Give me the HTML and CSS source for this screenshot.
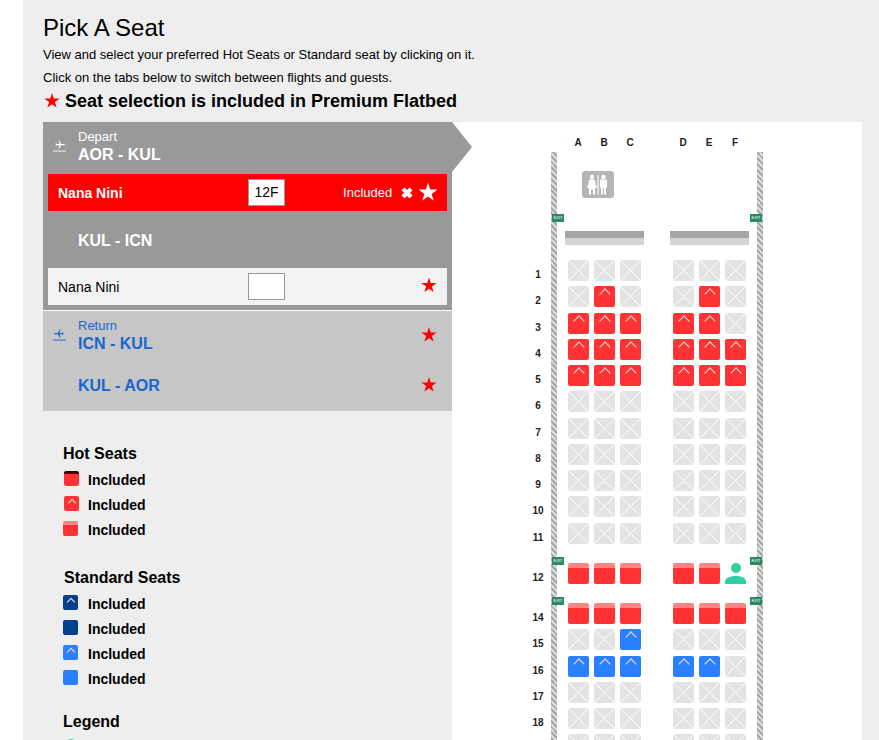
FILE: index.html
```html
<!DOCTYPE html>
<html lang="en">
<head>
    <meta charset="UTF-8">
    <meta name="viewport" content="width=device-width, initial-scale=1.0">
    <title>Pick A Seat</title>
    <link rel="stylesheet" href="styles.css">
</head>
<body>
    <svg class="defs" width="0" height="0">
        <symbol id="plane" viewBox="0 0 14 13">
            <path transform="translate(2 .5) scale(.85 .9)" d="M12 4.2H8L5.5 0H4.5L5.8 4.2H2.5L1.5 3H.8L1.4 5 .8 7H1.5L2.5 5.8H5.8L4.5 10H5.5L8 5.8H12C13 5.8 13 4.2 12 4.2Z"/>
            <rect x="0" y="11.5" width="14" height="1"/>
        </symbol>
        <symbol id="person" viewBox="0 0 21 21">
            <circle cx="11" cy="5" r="5"/>
            <path d="M0 21V19C0 15 5 13 11 13S21 15 21 19V21Z"/>
        </symbol>
    </svg>

    <div class="page">
        <h1>Pick A Seat</h1>
        <p>View and select your preferred Hot Seats or Standard seat by clicking on it.</p>
        <p>Click on the tabs below to switch between flights and guests.</p>
        <div class="notice"><span class="star star-title"></span>Seat selection is included in Premium Flatbed</div>

        <div class="content">
            <div class="sidebar">
                <div class="leg leg-active">
                    <div class="leg-head">
                        <svg class="leg-icon"><use href="#plane"/></svg>
                        <div>
                            <div class="leg-label">Depart</div>
                            <div class="leg-route">AOR - KUL</div>
                        </div>
                    </div>
                    <div class="guest guest-selected">
                        <span class="guest-name">Nana Nini</span>
                        <span class="seat-box">12F</span>
                        <span class="guest-price">Included</span>
                        <span class="guest-remove">&#10006;</span>
                        <span class="star star-big"></span>
                    </div>
                    <div class="leg-sub leg-route">KUL - ICN</div>
                    <div class="guest">
                        <span class="guest-name">Nana Nini</span>
                        <span class="seat-box"></span>
                        <span class="star star-small"></span>
                    </div>
                </div>

                <div class="leg leg-return">
                    <div class="leg-head">
                        <svg class="leg-icon flip"><use href="#plane"/></svg>
                        <div>
                            <div class="leg-label">Return</div>
                            <div class="leg-route">ICN - KUL</div>
                        </div>
                        <span class="star star-small"></span>
                    </div>
                    <div class="leg-sub leg-route">KUL - AOR<span class="star star-small"></span></div>
                </div>

                <div class="legend">
                    <h3>Hot Seats</h3>
                    <div class="legend-item nudge"><span class="seat seat-mini hot top-dark"></span>Included</div>
                    <div class="legend-item nudge"><span class="seat seat-mini hot up"></span>Included</div>
                    <div class="legend-item"><span class="seat seat-mini hot lip"></span>Included</div>

                    <h3 class="legend-gap nudge">Standard Seats</h3>
                    <div class="legend-item"><span class="seat seat-mini navy up"></span>Included</div>
                    <div class="legend-item"><span class="seat seat-mini navy"></span>Included</div>
                    <div class="legend-item"><span class="seat seat-mini blue up"></span>Included</div>
                    <div class="legend-item"><span class="seat seat-mini blue"></span>Included</div>

                    <h3 class="legend-last">Legend</h3>
                    <div class="legend-item"><svg class="person-mini"><use href="#person"/></svg></div>
                </div>
            </div>

            <div class="map">
                <div class="columns">
                    <span>A</span><span>B</span><span>C</span><i></i><span>D</span><span>E</span><span>F</span>
                </div>
                <div class="deck">
                    <span class="exit exit-l exit-1">EXIT</span><span class="exit exit-r exit-1">EXIT</span>
                    <span class="exit exit-l exit-2">EXIT</span><span class="exit exit-r exit-2">EXIT</span>
                    <span class="exit exit-l exit-3">EXIT</span><span class="exit exit-r exit-3">EXIT</span>

                    <div class="lav">
                        <svg viewBox="0 0 32 27" width="32" height="27">
                            <rect width="32" height="27" rx="3" fill="#b5b5b5"/>
                            <g fill="#fff">
                                <circle cx="10" cy="6" r="2.2"/>
                                <path d="M7.5 8.5H12.5L15 17H13V23.5H11V18.5H9V23.5H7V17H5Z"/>
                                <rect x="15.5" y="4" width="1.2" height="19.5"/>
                                <circle cx="21.5" cy="6" r="2.2"/>
                                <path d="M18 8.5H25V16.5H24V23.5H22V17H21V23.5H19V16.5H18Z"/>
                            </g>
                        </svg>
                    </div>
                    <div class="galley"><span></span><span></span></div>

                    <div class="row"><b class="row-no">1</b><span class="seat x"></span><span class="seat x"></span><span class="seat x"></span><i class="aisle"></i><span class="seat x"></span><span class="seat x"></span><span class="seat x"></span></div>
                    <div class="row"><b class="row-no">2</b><span class="seat x"></span><span class="seat hot up"></span><span class="seat x"></span><i class="aisle"></i><span class="seat x"></span><span class="seat hot up"></span><span class="seat x"></span></div>
                    <div class="row"><b class="row-no">3</b><span class="seat hot up"></span><span class="seat hot up"></span><span class="seat hot up"></span><i class="aisle"></i><span class="seat hot up"></span><span class="seat hot up"></span><span class="seat x"></span></div>
                    <div class="row"><b class="row-no">4</b><span class="seat hot up"></span><span class="seat hot up"></span><span class="seat hot up"></span><i class="aisle"></i><span class="seat hot up"></span><span class="seat hot up"></span><span class="seat hot up"></span></div>
                    <div class="row"><b class="row-no">5</b><span class="seat hot up"></span><span class="seat hot up"></span><span class="seat hot up"></span><i class="aisle"></i><span class="seat hot up"></span><span class="seat hot up"></span><span class="seat hot up"></span></div>
                    <div class="row"><b class="row-no">6</b><span class="seat x"></span><span class="seat x"></span><span class="seat x"></span><i class="aisle"></i><span class="seat x"></span><span class="seat x"></span><span class="seat x"></span></div>
                    <div class="row"><b class="row-no">7</b><span class="seat x"></span><span class="seat x"></span><span class="seat x"></span><i class="aisle"></i><span class="seat x"></span><span class="seat x"></span><span class="seat x"></span></div>
                    <div class="row"><b class="row-no">8</b><span class="seat x"></span><span class="seat x"></span><span class="seat x"></span><i class="aisle"></i><span class="seat x"></span><span class="seat x"></span><span class="seat x"></span></div>
                    <div class="row"><b class="row-no">9</b><span class="seat x"></span><span class="seat x"></span><span class="seat x"></span><i class="aisle"></i><span class="seat x"></span><span class="seat x"></span><span class="seat x"></span></div>
                    <div class="row"><b class="row-no">10</b><span class="seat x"></span><span class="seat x"></span><span class="seat x"></span><i class="aisle"></i><span class="seat x"></span><span class="seat x"></span><span class="seat x"></span></div>
                    <div class="row row-before-exit"><b class="row-no">11</b><span class="seat x"></span><span class="seat x"></span><span class="seat x"></span><i class="aisle"></i><span class="seat x"></span><span class="seat x"></span><span class="seat x"></span></div>
                    <div class="row row-before-exit"><b class="row-no">12</b><span class="seat hot lip"></span><span class="seat hot lip"></span><span class="seat hot lip"></span><i class="aisle"></i><span class="seat hot lip"></span><span class="seat hot lip"></span><svg class="seat-person"><use href="#person"/></svg></div>
                    <div class="row"><b class="row-no">14</b><span class="seat hot lip"></span><span class="seat hot lip"></span><span class="seat hot lip"></span><i class="aisle"></i><span class="seat hot lip"></span><span class="seat hot lip"></span><span class="seat hot lip"></span></div>
                    <div class="row"><b class="row-no">15</b><span class="seat x"></span><span class="seat x"></span><span class="seat blue up"></span><i class="aisle"></i><span class="seat x"></span><span class="seat x"></span><span class="seat x"></span></div>
                    <div class="row"><b class="row-no">16</b><span class="seat blue up"></span><span class="seat blue up"></span><span class="seat blue up"></span><i class="aisle"></i><span class="seat blue up"></span><span class="seat blue up"></span><span class="seat x"></span></div>
                    <div class="row"><b class="row-no">17</b><span class="seat x"></span><span class="seat x"></span><span class="seat x"></span><i class="aisle"></i><span class="seat x"></span><span class="seat x"></span><span class="seat x"></span></div>
                    <div class="row"><b class="row-no">18</b><span class="seat x"></span><span class="seat x"></span><span class="seat x"></span><i class="aisle"></i><span class="seat x"></span><span class="seat x"></span><span class="seat x"></span></div>
                    <div class="row"><b class="row-no"></b><span class="seat x"></span><span class="seat x"></span><span class="seat x"></span><i class="aisle"></i><span class="seat x"></span><span class="seat x"></span><span class="seat x"></span></div>
                </div>
            </div>
        </div>
    </div>
</body>
</html>
```

FILE: styles.css
```css
html, body {
    margin: 0;
    height: 740px;
    overflow: hidden;
}

body {
    font-family: "Liberation Sans", Arial, sans-serif;
    font-size: 14px;
    color: #000;
    background: #fff;
}

.defs {
    display: block;
    height: 0;
}

.page {
    margin-left: 23px;
    padding: 15px 0 0 20px;
    height: 725px;
    background: #eee;
    overflow: hidden;
}

h1 {
    margin: 0 0 2px;
    font-size: 24px;
    font-weight: normal;
    line-height: 26px;
}

p {
    margin: 0;
    font-size: 13px;
    line-height: 23px;
}

.notice {
    display: flex;
    align-items: center;
    height: 22px;
    margin-top: 1px;
    font-size: 18px;
    font-weight: bold;
}

/* stars */
.star {
    display: inline-block;
    flex: none;
    background: #f00;
    clip-path: polygon(50% 0, 61% 35%, 98% 35%, 68% 57%, 79% 91%, 50% 70%, 21% 91%, 32% 57%, 2% 35%, 39% 35%);
}

.star-title {
    width: 16px;
    height: 16px;
    margin: 0 5px 0 1px;
}

.star-small {
    width: 16px;
    height: 16px;
    margin: 0 0 2px auto;
}

.leg-head .star-small {
    margin-top: 10px;
}

.star-big {
    width: 20px;
    height: 20px;
    margin-left: 5px;
    background: #fff;
}

.content {
    display: flex;
    margin-top: 10px;
    height: 640px;
}

/* left column */
.sidebar {
    position: relative;
    flex: none;
    width: 409px;
}

.sidebar::after {
    content: "";
    position: absolute;
    left: 409px;
    top: 0;
    border-left: 20px solid #999;
    border-top: 25px solid transparent;
    border-bottom: 25px solid transparent;
}

.leg-active {
    padding: 0 5px 5px;
    background: #999;
    color: #fff;
}

.leg-return {
    box-sizing: border-box;
    height: 101px;
    padding-right: 15px;
    border-top: 1px solid #fff;
    background: #c6c6c6;
    color: #1767cf;
}

.leg-head {
    display: flex;
    height: 46px;
    padding-top: 6px;
}

.leg-return .leg-head {
    height: 47px;
}

.leg-icon {
    flex: none;
    width: 13px;
    height: 12px;
    margin: 12px 12px 0 5px;
    fill: currentColor;
}

.leg-return .leg-icon {
    margin-left: 10px;
}

.flip {
    transform: scaleX(-1);
}

.leg-label {
    padding-top: 1px;
    margin-bottom: -1px;
    font-size: 13px;
    line-height: 16px;
}

.leg-route {
    font-size: 16px;
    font-weight: bold;
    line-height: 22px;
}

.leg-sub {
    display: flex;
    align-items: center;
    height: 55px;
    padding: 2px 0 0 30px;
}

.leg-return .leg-sub {
    height: 40px;
    padding-left: 35px;
}

.guest {
    display: flex;
    align-items: center;
    height: 37px;
    padding: 0 10px;
    background: #f2f2f2;
    color: #000;
}

.guest-selected {
    padding-right: 9px;
    background: #f00;
    color: #fff;
}

.guest-name {
    width: 190px;
}

.guest-selected .guest-name {
    font-weight: bold;
}

.seat-box {
    box-sizing: border-box;
    width: 37px;
    height: 27px;
    border: 1px solid #999;
    background: #fff;
    color: #000;
    text-align: center;
    line-height: 25px;
}

.guest-price {
    margin-left: auto;
    font-size: 13px;
}

.guest-remove {
    margin-left: 9px;
    font-family: "DejaVu Sans", sans-serif;
    font-size: 14px;
    -webkit-text-stroke: 1px #fff;
}

/* legend */
.legend {
    padding: 32px 0 0 20px;
}

.legend h3 {
    margin: 0 0 6px;
    font-size: 16px;
    font-weight: bold;
    line-height: 22px;
}

.legend .legend-gap {
    margin-top: 31px;
}

.legend h3.nudge {
    margin-left: 1px;
}

.legend .legend-last {
    margin-top: 26px;
}

.legend-item {
    display: flex;
    align-items: flex-start;
    height: 15px;
    margin-bottom: 10px;
    font-weight: bold;
    line-height: 19px;
}

.nudge {
    margin-left: 1px;
}

.legend-item.nudge .seat {
    margin-right: 9px;
}

.person-mini {
    width: 15px;
    height: 15px;
    margin-right: 10px;
    fill: #2fcf9f;
}

/* seat map */
.map {
    flex: none;
    box-sizing: border-box;
    width: 410px;
    padding-left: 99px;
    background: #fff;
}

.columns {
    display: flex;
    height: 30px;
    padding-left: 14px;
    font-size: 10px;
    font-weight: bold;
    line-height: 41px;
    color: #222;
}

.columns span {
    width: 26px;
    text-align: center;
}

.columns i {
    width: 27px;
}

.deck {
    position: relative;
    width: 200px;
    height: 620px;
    padding-top: 19px;
    border-style: solid;
    border-width: 0 6px;
    border-image: repeating-linear-gradient(45deg, #a8a8a8 0 2px, #dcdcdc 2px 4px) 6;
}

.lav {
    height: 27px;
    margin: 0 0 33px 25px;
}

.lav svg {
    display: block;
}

.galley {
    display: flex;
    justify-content: space-between;
    width: 184px;
    margin: 0 0 15px 8px;
}

.galley span {
    width: 79px;
    height: 14px;
    background: linear-gradient(#a5a5a5 50%, #d5d5d5 50%);
}

.exit {
    position: absolute;
    width: 12px;
    height: 8px;
    background: #2b8a63;
    color: #fff;
    font-size: 4px;
    line-height: 8px;
    text-align: center;
}

.exit-l { left: -5px; }
.exit-r { right: -5px; }
.exit-1 { top: 62px; }
.exit-2 { top: 405px; }
.exit-3 { top: 445px; }

.row {
    display: flex;
    height: 21px;
    margin-bottom: 5.25px;
}

.row-before-exit {
    margin-bottom: 19.25px;
}

.row-no {
    flex: none;
    width: 28px;
    margin: 0 16px 0 -33px;
    padding-top: 4px;
    font-size: 10px;
    line-height: 21px;
    text-align: center;
    color: #222;
}

.aisle {
    flex: none;
    width: 27px;
}

/* seats */
.seat {
    flex: none;
    display: flex;
    justify-content: center;
    box-sizing: border-box;
    width: 21px;
    height: 21px;
    margin-right: 5px;
    border-radius: 2px;
}

.seat-mini {
    width: 15px;
    height: 15px;
    margin-right: 10px;
}

.x {
    background:
        linear-gradient(to top right, transparent calc(50% - .6px), #fff calc(50% - .6px), #fff calc(50% + .6px), transparent calc(50% + .6px)),
        linear-gradient(to bottom right, transparent calc(50% - .6px), #fff calc(50% - .6px), #fff calc(50% + .6px), transparent calc(50% + .6px)),
        #e2e4e4;
}

.hot { background: #ff3333; }
.navy { background: #00408f; }
.blue { background: #2b80ff; }

.lip {
    border-top: 5px solid #ff8585;
}

.seat-mini.lip {
    border-top-width: 4px;
}

.top-dark {
    border-top: 3px solid #4d0000;
}

.up::before {
    content: "";
    box-sizing: border-box;
    width: 8px;
    height: 8px;
    margin-top: 4px;
    border-top: 1.5px solid #ffdcdc;
    border-left: 1.5px solid #ffdcdc;
    transform: rotate(45deg);
}

.seat-mini.up::before {
    width: 6px;
    height: 6px;
}

.seat-person {
    flex: none;
    width: 21px;
    height: 21px;
    fill: #2fcf9f;
}
```
